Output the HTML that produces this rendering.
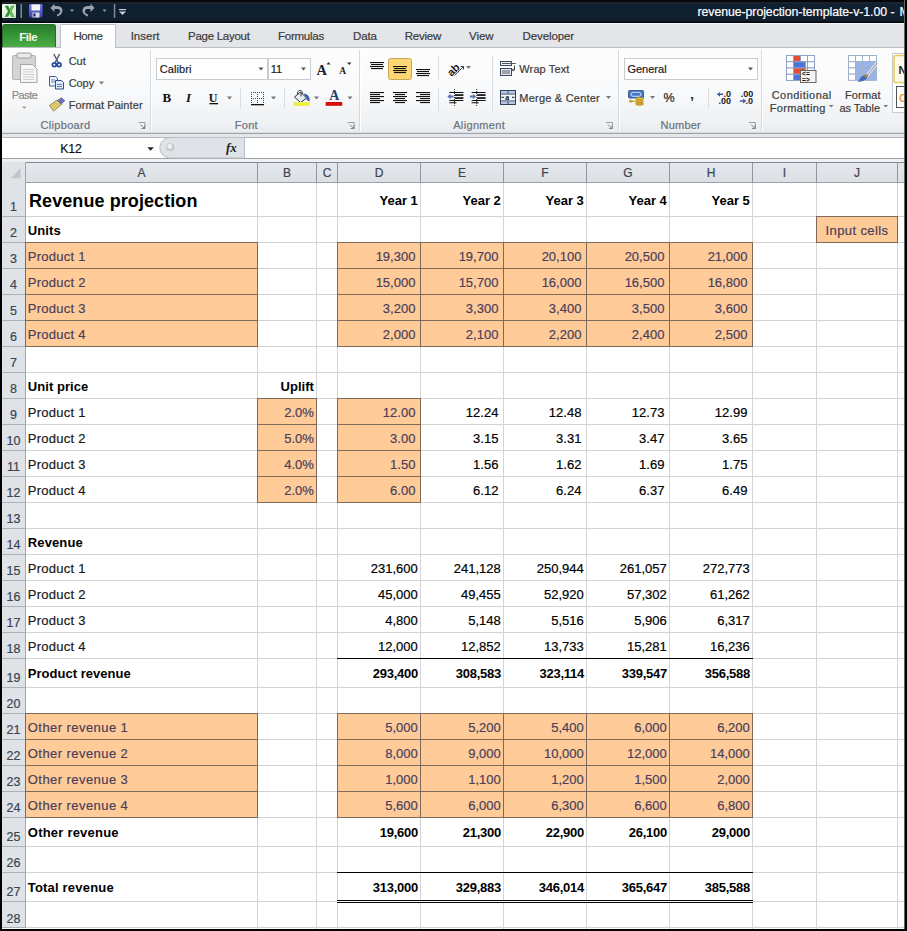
<!DOCTYPE html><html><head><meta charset="utf-8"><style>*{margin:0;padding:0;box-sizing:border-box}
html,body{width:907px;height:931px;overflow:hidden;background:#fff;font-family:"Liberation Sans", sans-serif;position:relative}
.a{position:absolute}
.t{position:absolute;white-space:nowrap;line-height:1}
.n{-webkit-text-stroke:0.2px currentColor}
</style></head><body><div class="a" style="left:0px;top:0px;width:907px;height:23px;background:linear-gradient(#05070b 0px,#05070b 1.5px,#1a2430 2.5px,#17222e 3.5px,#0e1f31 5px,#102030 13px,#111d2b 20.5px,#05090e 22px,#05090e 23px)"></div>
<div class="a" style="left:0px;top:23px;width:907px;height:24px;background:#e3e5e8"></div>
<div class="a" style="left:0px;top:23px;width:907px;height:1px;background:#f3f4f5"></div>
<div class="a" style="left:0px;top:47px;width:907px;height:87px;background:linear-gradient(#fdfdfd 0%,#f9fafb 50%,#eff1f3 85%,#e9ecef 100%)"></div>
<div class="a" style="left:0px;top:47px;width:907px;height:1px;background:#b9bec4"></div>
<div class="a" style="left:0px;top:133px;width:907px;height:1px;background:#9ea4ab"></div>
<div class="a" style="left:0px;top:132px;width:907px;height:1px;background:#d9dde1"></div>
<div class="a" style="left:0px;top:134px;width:907px;height:28px;background:#e4e7ea"></div>
<div class="a" style="left:0px;top:137px;width:907px;height:1px;background:#b3b9c0"></div>
<div class="a" style="left:0px;top:138px;width:907px;height:20px;background:#fff"></div>
<div class="a" style="left:0px;top:158px;width:907px;height:1px;background:#9ea2a7"></div>
<div class="a" style="left:0px;top:159px;width:907px;height:3px;background:#eef0f3"></div>
<div class="a" style="left:0px;top:162px;width:907px;height:21px;background:linear-gradient(#e5e8ec,#dcdfe4)"></div>
<div class="a" style="left:0px;top:162px;width:907px;height:1px;background:#7f8893"></div>
<div class="a" style="left:0px;top:182px;width:907px;height:1px;background:#9aa1a9"></div>
<div class="a" style="left:0px;top:162px;width:25px;height:766px;background:#dfe3e8"></div>
<div class="a" style="left:25px;top:162px;width:1px;height:766px;background:#9ea7b1"></div>
<svg class="a" style="left:0;top:160px" width="26" height="24"><path d="M20.6,7.9 L20.6,18.2 L10.6,18.2 Z" fill="#c3c7cc"/></svg>
<div class="a" style="left:257px;top:183px;width:1px;height:746px;background:#d4d4d4"></div>
<div class="a" style="left:257px;top:163px;width:1px;height:19px;background:#8e969f"></div>
<div class="a" style="left:316px;top:183px;width:1px;height:746px;background:#d4d4d4"></div>
<div class="a" style="left:316px;top:163px;width:1px;height:19px;background:#8e969f"></div>
<div class="a" style="left:337px;top:183px;width:1px;height:746px;background:#d4d4d4"></div>
<div class="a" style="left:337px;top:163px;width:1px;height:19px;background:#8e969f"></div>
<div class="a" style="left:420px;top:183px;width:1px;height:746px;background:#d4d4d4"></div>
<div class="a" style="left:420px;top:163px;width:1px;height:19px;background:#8e969f"></div>
<div class="a" style="left:503px;top:183px;width:1px;height:746px;background:#d4d4d4"></div>
<div class="a" style="left:503px;top:163px;width:1px;height:19px;background:#8e969f"></div>
<div class="a" style="left:586px;top:183px;width:1px;height:746px;background:#d4d4d4"></div>
<div class="a" style="left:586px;top:163px;width:1px;height:19px;background:#8e969f"></div>
<div class="a" style="left:669px;top:183px;width:1px;height:746px;background:#d4d4d4"></div>
<div class="a" style="left:669px;top:163px;width:1px;height:19px;background:#8e969f"></div>
<div class="a" style="left:752px;top:183px;width:1px;height:746px;background:#d4d4d4"></div>
<div class="a" style="left:752px;top:163px;width:1px;height:19px;background:#8e969f"></div>
<div class="a" style="left:816px;top:183px;width:1px;height:746px;background:#d4d4d4"></div>
<div class="a" style="left:816px;top:163px;width:1px;height:19px;background:#8e969f"></div>
<div class="a" style="left:897px;top:183px;width:1px;height:746px;background:#d4d4d4"></div>
<div class="a" style="left:897px;top:163px;width:1px;height:19px;background:#8e969f"></div>
<div class="a" style="left:26px;top:216px;width:878px;height:1px;background:#d4d4d4"></div>
<div class="a" style="left:2px;top:216px;width:23px;height:1px;background:#aab1b9"></div>
<div class="a" style="left:26px;top:242px;width:878px;height:1px;background:#d4d4d4"></div>
<div class="a" style="left:2px;top:242px;width:23px;height:1px;background:#aab1b9"></div>
<div class="a" style="left:26px;top:268px;width:878px;height:1px;background:#d4d4d4"></div>
<div class="a" style="left:2px;top:268px;width:23px;height:1px;background:#aab1b9"></div>
<div class="a" style="left:26px;top:294px;width:878px;height:1px;background:#d4d4d4"></div>
<div class="a" style="left:2px;top:294px;width:23px;height:1px;background:#aab1b9"></div>
<div class="a" style="left:26px;top:320px;width:878px;height:1px;background:#d4d4d4"></div>
<div class="a" style="left:2px;top:320px;width:23px;height:1px;background:#aab1b9"></div>
<div class="a" style="left:26px;top:346px;width:878px;height:1px;background:#d4d4d4"></div>
<div class="a" style="left:2px;top:346px;width:23px;height:1px;background:#aab1b9"></div>
<div class="a" style="left:26px;top:372px;width:878px;height:1px;background:#d4d4d4"></div>
<div class="a" style="left:2px;top:372px;width:23px;height:1px;background:#aab1b9"></div>
<div class="a" style="left:26px;top:398px;width:878px;height:1px;background:#d4d4d4"></div>
<div class="a" style="left:2px;top:398px;width:23px;height:1px;background:#aab1b9"></div>
<div class="a" style="left:26px;top:424px;width:878px;height:1px;background:#d4d4d4"></div>
<div class="a" style="left:2px;top:424px;width:23px;height:1px;background:#aab1b9"></div>
<div class="a" style="left:26px;top:450px;width:878px;height:1px;background:#d4d4d4"></div>
<div class="a" style="left:2px;top:450px;width:23px;height:1px;background:#aab1b9"></div>
<div class="a" style="left:26px;top:476px;width:878px;height:1px;background:#d4d4d4"></div>
<div class="a" style="left:2px;top:476px;width:23px;height:1px;background:#aab1b9"></div>
<div class="a" style="left:26px;top:502px;width:878px;height:1px;background:#d4d4d4"></div>
<div class="a" style="left:2px;top:502px;width:23px;height:1px;background:#aab1b9"></div>
<div class="a" style="left:26px;top:528px;width:878px;height:1px;background:#d4d4d4"></div>
<div class="a" style="left:2px;top:528px;width:23px;height:1px;background:#aab1b9"></div>
<div class="a" style="left:26px;top:554px;width:878px;height:1px;background:#d4d4d4"></div>
<div class="a" style="left:2px;top:554px;width:23px;height:1px;background:#aab1b9"></div>
<div class="a" style="left:26px;top:580px;width:878px;height:1px;background:#d4d4d4"></div>
<div class="a" style="left:2px;top:580px;width:23px;height:1px;background:#aab1b9"></div>
<div class="a" style="left:26px;top:606px;width:878px;height:1px;background:#d4d4d4"></div>
<div class="a" style="left:2px;top:606px;width:23px;height:1px;background:#aab1b9"></div>
<div class="a" style="left:26px;top:632px;width:878px;height:1px;background:#d4d4d4"></div>
<div class="a" style="left:2px;top:632px;width:23px;height:1px;background:#aab1b9"></div>
<div class="a" style="left:26px;top:658px;width:878px;height:1px;background:#d4d4d4"></div>
<div class="a" style="left:2px;top:658px;width:23px;height:1px;background:#aab1b9"></div>
<div class="a" style="left:26px;top:687px;width:878px;height:1px;background:#d4d4d4"></div>
<div class="a" style="left:2px;top:687px;width:23px;height:1px;background:#aab1b9"></div>
<div class="a" style="left:26px;top:713px;width:878px;height:1px;background:#d4d4d4"></div>
<div class="a" style="left:2px;top:713px;width:23px;height:1px;background:#aab1b9"></div>
<div class="a" style="left:26px;top:739px;width:878px;height:1px;background:#d4d4d4"></div>
<div class="a" style="left:2px;top:739px;width:23px;height:1px;background:#aab1b9"></div>
<div class="a" style="left:26px;top:765px;width:878px;height:1px;background:#d4d4d4"></div>
<div class="a" style="left:2px;top:765px;width:23px;height:1px;background:#aab1b9"></div>
<div class="a" style="left:26px;top:791px;width:878px;height:1px;background:#d4d4d4"></div>
<div class="a" style="left:2px;top:791px;width:23px;height:1px;background:#aab1b9"></div>
<div class="a" style="left:26px;top:817px;width:878px;height:1px;background:#d4d4d4"></div>
<div class="a" style="left:2px;top:817px;width:23px;height:1px;background:#aab1b9"></div>
<div class="a" style="left:26px;top:846px;width:878px;height:1px;background:#d4d4d4"></div>
<div class="a" style="left:2px;top:846px;width:23px;height:1px;background:#aab1b9"></div>
<div class="a" style="left:26px;top:872px;width:878px;height:1px;background:#d4d4d4"></div>
<div class="a" style="left:2px;top:872px;width:23px;height:1px;background:#aab1b9"></div>
<div class="a" style="left:26px;top:901px;width:878px;height:1px;background:#d4d4d4"></div>
<div class="a" style="left:2px;top:901px;width:23px;height:1px;background:#aab1b9"></div>
<div class="a" style="left:26px;top:927px;width:878px;height:1px;background:#d4d4d4"></div>
<div class="a" style="left:2px;top:927px;width:23px;height:1px;background:#aab1b9"></div>
<div class="a" style="left:25px;top:242px;width:233px;height:105px;background:#ffcc99"></div>
<div class="a" style="left:25px;top:242px;width:233px;height:1px;background:#7d6a58"></div>
<div class="a" style="left:25px;top:268px;width:233px;height:1px;background:#7d6a58"></div>
<div class="a" style="left:25px;top:294px;width:233px;height:1px;background:#7d6a58"></div>
<div class="a" style="left:25px;top:320px;width:233px;height:1px;background:#7d6a58"></div>
<div class="a" style="left:25px;top:346px;width:233px;height:1px;background:#7d6a58"></div>
<div class="a" style="left:25px;top:242px;width:1px;height:105px;background:#7d6a58"></div>
<div class="a" style="left:257px;top:242px;width:1px;height:105px;background:#7d6a58"></div>
<div class="a" style="left:337px;top:242px;width:416px;height:105px;background:#ffcc99"></div>
<div class="a" style="left:337px;top:242px;width:416px;height:1px;background:#7d6a58"></div>
<div class="a" style="left:337px;top:268px;width:416px;height:1px;background:#7d6a58"></div>
<div class="a" style="left:337px;top:294px;width:416px;height:1px;background:#7d6a58"></div>
<div class="a" style="left:337px;top:320px;width:416px;height:1px;background:#7d6a58"></div>
<div class="a" style="left:337px;top:346px;width:416px;height:1px;background:#7d6a58"></div>
<div class="a" style="left:337px;top:242px;width:1px;height:105px;background:#7d6a58"></div>
<div class="a" style="left:420px;top:242px;width:1px;height:105px;background:#7d6a58"></div>
<div class="a" style="left:503px;top:242px;width:1px;height:105px;background:#7d6a58"></div>
<div class="a" style="left:586px;top:242px;width:1px;height:105px;background:#7d6a58"></div>
<div class="a" style="left:669px;top:242px;width:1px;height:105px;background:#7d6a58"></div>
<div class="a" style="left:752px;top:242px;width:1px;height:105px;background:#7d6a58"></div>
<div class="a" style="left:816px;top:216px;width:82px;height:27px;background:#ffcc99"></div>
<div class="a" style="left:816px;top:216px;width:82px;height:1px;background:#7d6a58"></div>
<div class="a" style="left:816px;top:242px;width:82px;height:1px;background:#7d6a58"></div>
<div class="a" style="left:816px;top:216px;width:1px;height:27px;background:#7d6a58"></div>
<div class="a" style="left:897px;top:216px;width:1px;height:27px;background:#7d6a58"></div>
<div class="a" style="left:257px;top:398px;width:60px;height:105px;background:#ffcc99"></div>
<div class="a" style="left:257px;top:398px;width:60px;height:1px;background:#7d6a58"></div>
<div class="a" style="left:257px;top:424px;width:60px;height:1px;background:#7d6a58"></div>
<div class="a" style="left:257px;top:450px;width:60px;height:1px;background:#7d6a58"></div>
<div class="a" style="left:257px;top:476px;width:60px;height:1px;background:#7d6a58"></div>
<div class="a" style="left:257px;top:502px;width:60px;height:1px;background:#7d6a58"></div>
<div class="a" style="left:257px;top:398px;width:1px;height:105px;background:#7d6a58"></div>
<div class="a" style="left:316px;top:398px;width:1px;height:105px;background:#7d6a58"></div>
<div class="a" style="left:337px;top:398px;width:84px;height:105px;background:#ffcc99"></div>
<div class="a" style="left:337px;top:398px;width:84px;height:1px;background:#7d6a58"></div>
<div class="a" style="left:337px;top:424px;width:84px;height:1px;background:#7d6a58"></div>
<div class="a" style="left:337px;top:450px;width:84px;height:1px;background:#7d6a58"></div>
<div class="a" style="left:337px;top:476px;width:84px;height:1px;background:#7d6a58"></div>
<div class="a" style="left:337px;top:502px;width:84px;height:1px;background:#7d6a58"></div>
<div class="a" style="left:337px;top:398px;width:1px;height:105px;background:#7d6a58"></div>
<div class="a" style="left:420px;top:398px;width:1px;height:105px;background:#7d6a58"></div>
<div class="a" style="left:25px;top:713px;width:233px;height:105px;background:#ffcc99"></div>
<div class="a" style="left:25px;top:713px;width:233px;height:1px;background:#7d6a58"></div>
<div class="a" style="left:25px;top:739px;width:233px;height:1px;background:#7d6a58"></div>
<div class="a" style="left:25px;top:765px;width:233px;height:1px;background:#7d6a58"></div>
<div class="a" style="left:25px;top:791px;width:233px;height:1px;background:#7d6a58"></div>
<div class="a" style="left:25px;top:817px;width:233px;height:1px;background:#7d6a58"></div>
<div class="a" style="left:25px;top:713px;width:1px;height:105px;background:#7d6a58"></div>
<div class="a" style="left:257px;top:713px;width:1px;height:105px;background:#7d6a58"></div>
<div class="a" style="left:337px;top:713px;width:416px;height:105px;background:#ffcc99"></div>
<div class="a" style="left:337px;top:713px;width:416px;height:1px;background:#7d6a58"></div>
<div class="a" style="left:337px;top:739px;width:416px;height:1px;background:#7d6a58"></div>
<div class="a" style="left:337px;top:765px;width:416px;height:1px;background:#7d6a58"></div>
<div class="a" style="left:337px;top:791px;width:416px;height:1px;background:#7d6a58"></div>
<div class="a" style="left:337px;top:817px;width:416px;height:1px;background:#7d6a58"></div>
<div class="a" style="left:337px;top:713px;width:1px;height:105px;background:#7d6a58"></div>
<div class="a" style="left:420px;top:713px;width:1px;height:105px;background:#7d6a58"></div>
<div class="a" style="left:503px;top:713px;width:1px;height:105px;background:#7d6a58"></div>
<div class="a" style="left:586px;top:713px;width:1px;height:105px;background:#7d6a58"></div>
<div class="a" style="left:669px;top:713px;width:1px;height:105px;background:#7d6a58"></div>
<div class="a" style="left:752px;top:713px;width:1px;height:105px;background:#7d6a58"></div>
<div class="a" style="left:337px;top:658px;width:416px;height:1px;background:#000"></div>
<div class="a" style="left:337px;top:872px;width:416px;height:1px;background:#000"></div>
<div class="a" style="left:337px;top:900px;width:416px;height:1px;background:#000"></div>
<div class="a" style="left:337px;top:902px;width:416px;height:1px;background:#000"></div>
<div class="a" style="left:337px;top:901px;width:416px;height:1px;background:#fff"></div>
<div class="a" style="left:2px;top:24px;width:54px;height:23px;background:linear-gradient(#2a7c2d,#3a9a3a 60%,#4cae44);border:1px solid #236d26;border-bottom:none;border-radius:3px 3px 0 0"></div>
<div class="a" style="left:60px;top:24px;width:56px;height:24px;background:linear-gradient(#fff,#fbfcfd);border:1px solid #bac1c9;border-bottom:none;border-radius:2px 2px 0 0"></div>
<svg class="a" style="left:0;top:0" width="907" height="162" viewBox="0 0 907 162"><defs><linearGradient id="xg" x1="0" y1="0" x2="1" y2="1"><stop offset="0" stop-color="#f4fbf0"/><stop offset="1" stop-color="#cfeac4"/></linearGradient><linearGradient id="sg" x1="0" y1="0" x2="0" y2="1"><stop offset="0" stop-color="#7a7ee6"/><stop offset="1" stop-color="#3a3fb0"/></linearGradient></defs><rect x="2" y="4" width="14" height="14" rx="1" fill="url(#xg)"/><path d="M4.8,5.8h3.3l1.6,3.2l1.6,-3.2h3.3l-3.2,5.4l3.2,5.6h-3.3l-1.6,-3.2l-1.6,3.2h-3.3l3.2,-5.6z" fill="#2f8a36"/><path d="M9.7,9 l1.6,-3.2h3.3l-3.2,5.4l3.2,5.6h-3.3l-1.6,-3.2z" fill="#7cc46e" opacity="0.8"/><rect x="20.5" y="4" width="1.5" height="14" fill="#7d8a97"/><rect x="29" y="4" width="13.5" height="13.5" rx="1.5" fill="url(#sg)"/><rect x="31.5" y="4.5" width="8.5" height="6" fill="#f4f4f8"/><rect x="32.5" y="12.5" width="7" height="5" fill="#d8d8ee"/><rect x="33.5" y="13.5" width="2" height="3" fill="#1a1a3a"/><path d="M57,16.5 C64,15 64.5,6 57.5,6 L54.5,6 L54.5,3.5 L50.5,8 L54.5,12 L54.5,9 L57.5,9 C61,9 61,13.5 57,14.5 Z" fill="#9aa3ad"/><path d="M88,16.5 C81,15 80.5,6 87.5,6 L90.5,6 L90.5,3.5 L94.5,8 L90.5,12 L90.5,9 L87.5,9 C84,9 84,13.5 88,14.5 Z" fill="#9aa3ad"/><path d="M70,9.5h4l-2.0,2.5z" fill="#8d97a2"/><path d="M102.5,9.5h4l-2.0,2.5z" fill="#8d97a2"/><rect x="113.8" y="4" width="1.5" height="14" fill="#7d8a97"/><rect x="119" y="9" width="7" height="1.2" fill="#c8cdd3"/><path d="M119,11.5h7l-3.5,3.5z" fill="#c8cdd3"/><rect x="150" y="50" width="1" height="81" fill="#d6dadf"/><rect x="151" y="50" width="1" height="81" fill="#ffffff"/><rect x="359" y="50" width="1" height="81" fill="#d6dadf"/><rect x="360" y="50" width="1" height="81" fill="#ffffff"/><rect x="618" y="50" width="1" height="81" fill="#d6dadf"/><rect x="619" y="50" width="1" height="81" fill="#ffffff"/><rect x="761" y="50" width="1" height="81" fill="#d6dadf"/><rect x="762" y="50" width="1" height="81" fill="#ffffff"/><rect x="240" y="88" width="1" height="20" fill="#d9dde2"/><rect x="284" y="88" width="1" height="20" fill="#d9dde2"/><rect x="708" y="88" width="1" height="20" fill="#d9dde2"/><rect x="438" y="56" width="1" height="24" fill="#d9dde2"/><rect x="438" y="88" width="1" height="23.5" fill="#d9dde2"/><rect x="492" y="56" width="1" height="55.5" fill="#d9dde2"/><path d="M138.5,122.5h6.5v6.5" fill="none" stroke="#9aa0a8" stroke-width="1"/><path d="M140.5,124.5l4,4m0,-3v3h-3" fill="none" stroke="#7d848c" stroke-width="1"/><path d="M347.7,122.5h6.5v6.5" fill="none" stroke="#9aa0a8" stroke-width="1"/><path d="M349.7,124.5l4,4m0,-3v3h-3" fill="none" stroke="#7d848c" stroke-width="1"/><path d="M606,122.5h6.5v6.5" fill="none" stroke="#9aa0a8" stroke-width="1"/><path d="M608,124.5l4,4m0,-3v3h-3" fill="none" stroke="#7d848c" stroke-width="1"/><path d="M749,122.5h6.5v6.5" fill="none" stroke="#9aa0a8" stroke-width="1"/><path d="M751,124.5l4,4m0,-3v3h-3" fill="none" stroke="#7d848c" stroke-width="1"/><rect x="12.5" y="55.5" width="23" height="24" rx="1.5" fill="#d4d4d4" stroke="#b3b3b3"/><rect x="17" y="53" width="14" height="5" rx="1" fill="#e9e9e9" stroke="#9d9d9d"/><path d="M20.5,64.5h12l4.5,4.5v13.5h-16.5z" fill="#f8f6f8" stroke="#a8a8a8"/><rect x="23" y="69" width="11" height="0.9" fill="#c9c9c9"/><rect x="23" y="71.5" width="11" height="0.9" fill="#c9c9c9"/><rect x="23" y="74" width="11" height="0.9" fill="#c9c9c9"/><rect x="23" y="76.5" width="11" height="0.9" fill="#c9c9c9"/><rect x="23" y="79" width="11" height="0.9" fill="#c9c9c9"/><path d="M22,106.5h4.5l-2.25,2.5z" fill="#a0a0a0"/><path d="M53.8,54 L58.2,62.5 M59.6,54 L55.2,62.5" stroke="#4a5570" stroke-width="1.4" fill="none"/><circle cx="54.3" cy="64.8" r="1.9" fill="#fff" stroke="#24489a" stroke-width="1.7"/><circle cx="59.1" cy="64.8" r="1.9" fill="#fff" stroke="#24489a" stroke-width="1.7"/><path d="M49.5,76.5h6l2,2v7.5h-8z" fill="#eef3fb" stroke="#3d5f98"/><path d="M55.5,80.5h6l2,2v6.5h-8z" fill="#dfe8f6" stroke="#2d4f88"/><rect x="51" y="79.5" width="4" height="0.9" fill="#5478b6"/><rect x="51" y="81.5" width="4" height="0.9" fill="#5478b6"/><rect x="57" y="84" width="5" height="0.9" fill="#5478b6"/><rect x="57" y="86" width="5" height="0.9" fill="#5478b6"/><path d="M99,81.5h5l-2.5,3z" fill="#777"/><path d="M49.5,105.5 L57,100 L61.5,104.5 L53.5,111 Z" fill="#e2d27a" stroke="#7d6d30" stroke-width="0.8"/><path d="M51.5,106.5 L57.5,102 M52.5,108.5 L59,103.5" stroke="#b8a450" stroke-width="0.6"/><path d="M57.5,100.5 L61.5,97.8 L64.8,100.8 L61.2,104 Z" fill="#7573c0" stroke="#4b4a8a" stroke-width="0.6"/><rect x="156.5" y="58.5" width="111" height="21" fill="#fff" stroke="#c7ccd2"/><rect x="268.5" y="58.5" width="42" height="21" fill="#fff" stroke="#c7ccd2"/><path d="M258.5,67.5h5l-2.5,3z" fill="#555"/><path d="M301,67.5h5l-2.5,3z" fill="#555"/><path d="M326.5,64.5l2,-2.5l2,2.5z" fill="#333"/><path d="M347,62.5h4.5l-2.25,2.5z" fill="#333"/><rect x="209.5" y="103" width="8.5" height="1.3" fill="#111"/><path d="M227,96.5h5l-2.5,3z" fill="#777"/><rect x="251" y="92" width="1" height="1" fill="#444"/><rect x="251" y="98" width="1" height="1" fill="#444"/><rect x="251" y="92" width="1" height="1" fill="#444"/><rect x="257" y="92" width="1" height="1" fill="#444"/><rect x="263" y="92" width="1" height="1" fill="#444"/><rect x="253" y="92" width="1" height="1" fill="#444"/><rect x="253" y="98" width="1" height="1" fill="#444"/><rect x="251" y="94" width="1" height="1" fill="#444"/><rect x="257" y="94" width="1" height="1" fill="#444"/><rect x="263" y="94" width="1" height="1" fill="#444"/><rect x="255" y="92" width="1" height="1" fill="#444"/><rect x="255" y="98" width="1" height="1" fill="#444"/><rect x="251" y="96" width="1" height="1" fill="#444"/><rect x="257" y="96" width="1" height="1" fill="#444"/><rect x="263" y="96" width="1" height="1" fill="#444"/><rect x="257" y="92" width="1" height="1" fill="#444"/><rect x="257" y="98" width="1" height="1" fill="#444"/><rect x="251" y="98" width="1" height="1" fill="#444"/><rect x="257" y="98" width="1" height="1" fill="#444"/><rect x="263" y="98" width="1" height="1" fill="#444"/><rect x="259" y="92" width="1" height="1" fill="#444"/><rect x="259" y="98" width="1" height="1" fill="#444"/><rect x="251" y="100" width="1" height="1" fill="#444"/><rect x="257" y="100" width="1" height="1" fill="#444"/><rect x="263" y="100" width="1" height="1" fill="#444"/><rect x="261" y="92" width="1" height="1" fill="#444"/><rect x="261" y="98" width="1" height="1" fill="#444"/><rect x="251" y="102" width="1" height="1" fill="#444"/><rect x="257" y="102" width="1" height="1" fill="#444"/><rect x="263" y="102" width="1" height="1" fill="#444"/><rect x="263" y="92" width="1" height="1" fill="#444"/><rect x="263" y="98" width="1" height="1" fill="#444"/><rect x="251" y="104" width="1" height="1" fill="#444"/><rect x="257" y="104" width="1" height="1" fill="#444"/><rect x="263" y="104" width="1" height="1" fill="#444"/><rect x="251" y="104" width="13" height="1.3" fill="#111"/><path d="M271,96.5h5l-2.5,3z" fill="#777"/><path d="M294.5,97 L300.5,92 L306.5,98 L300.5,102.5 Z" fill="#e6edf6" stroke="#2b2b2b" stroke-width="1"/><path d="M297.5,94.5 C297,89.5 302.5,89 302.5,93.5" fill="none" stroke="#333" stroke-width="1"/><rect x="300.5" y="92.5" width="1" height="4" fill="#333"/><path d="M303.5,93.5 C308,93.5 310.5,97.5 309.5,101.5 L306.5,100 L306.5,98 Z" fill="#3d5fa6"/><rect x="293.5" y="102" width="16" height="4" fill="#eef04a"/><path d="M314,96.5h5l-2.5,3z" fill="#777"/><rect x="325.7" y="102" width="16.5" height="3.8" fill="#d70a0a"/><path d="M347.5,96.5h5l-2.5,3z" fill="#777"/><rect x="388.5" y="58.5" width="23" height="21" rx="2" fill="#fcd774" stroke="#c9a858"/><rect x="370" y="62" width="14" height="1.1" fill="#111"/><rect x="371" y="64" width="12" height="1.1" fill="#111"/><rect x="370" y="66" width="14" height="1.1" fill="#111"/><rect x="371" y="68" width="12" height="1.1" fill="#111"/><rect x="393" y="66" width="14" height="1.1" fill="#111"/><rect x="394" y="68" width="12" height="1.1" fill="#111"/><rect x="393" y="70" width="14" height="1.1" fill="#111"/><rect x="394" y="72" width="12" height="1.1" fill="#111"/><rect x="416" y="69" width="14" height="1.1" fill="#111"/><rect x="417" y="71" width="12" height="1.1" fill="#111"/><rect x="416" y="73" width="14" height="1.1" fill="#111"/><rect x="417" y="75" width="12" height="1.1" fill="#111"/><rect x="370" y="92" width="14" height="1.1" fill="#111"/><rect x="393.0" y="92" width="14" height="1.1" fill="#111"/><rect x="416" y="92" width="14" height="1.1" fill="#111"/><rect x="370" y="94" width="10" height="1.1" fill="#111"/><rect x="395.0" y="94" width="10" height="1.1" fill="#111"/><rect x="420" y="94" width="10" height="1.1" fill="#111"/><rect x="370" y="96" width="14" height="1.1" fill="#111"/><rect x="393.0" y="96" width="14" height="1.1" fill="#111"/><rect x="416" y="96" width="14" height="1.1" fill="#111"/><rect x="370" y="98" width="10" height="1.1" fill="#111"/><rect x="395.0" y="98" width="10" height="1.1" fill="#111"/><rect x="420" y="98" width="10" height="1.1" fill="#111"/><rect x="370" y="100" width="14" height="1.1" fill="#111"/><rect x="393.0" y="100" width="14" height="1.1" fill="#111"/><rect x="416" y="100" width="14" height="1.1" fill="#111"/><rect x="370" y="102" width="10" height="1.1" fill="#111"/><rect x="395.0" y="102" width="10" height="1.1" fill="#111"/><rect x="420" y="102" width="10" height="1.1" fill="#111"/><text x="0" y="0" transform="translate(451.5,77) rotate(-45)" font-family="Liberation Sans" font-size="11" font-weight="bold" fill="#1a1a1a">ab</text><path d="M454.5,75.5 L463.5,66.5" stroke="#333" stroke-width="0.9"/><path d="M460.5,66.5 h3 v3" stroke="#333" fill="none" stroke-width="0.9"/><path d="M466,66h5l-2.5,3z" fill="#777"/><rect x="454.0" y="89" width="1" height="1" fill="#333"/><rect x="454.0" y="91" width="1" height="1" fill="#333"/><rect x="454.0" y="93" width="1" height="1" fill="#333"/><rect x="454.0" y="95" width="1" height="1" fill="#333"/><rect x="454.0" y="97" width="1" height="1" fill="#333"/><rect x="454.0" y="99" width="1" height="1" fill="#333"/><rect x="454.0" y="101" width="1" height="1" fill="#333"/><rect x="454.0" y="103" width="1" height="1" fill="#333"/><rect x="454.0" y="105" width="1" height="1" fill="#333"/><rect x="449.4" y="92" width="14" height="1" fill="#111"/><rect x="454.9" y="94.2" width="8.5" height="1.7" fill="#111"/><rect x="454.9" y="97.2" width="8.5" height="1.7" fill="#111"/><rect x="449.4" y="100" width="14" height="1" fill="#111"/><rect x="449.4" y="102.2" width="7" height="1" fill="#111"/><path d="M447.4,96.5 l3.2,-2.8 v1.9 h3 v1.8 h-3 v1.9z" fill="#5873ad"/><rect x="476.20000000000005" y="89" width="1" height="1" fill="#333"/><rect x="476.20000000000005" y="91" width="1" height="1" fill="#333"/><rect x="476.20000000000005" y="93" width="1" height="1" fill="#333"/><rect x="476.20000000000005" y="95" width="1" height="1" fill="#333"/><rect x="476.20000000000005" y="97" width="1" height="1" fill="#333"/><rect x="476.20000000000005" y="99" width="1" height="1" fill="#333"/><rect x="476.20000000000005" y="101" width="1" height="1" fill="#333"/><rect x="476.20000000000005" y="103" width="1" height="1" fill="#333"/><rect x="476.20000000000005" y="105" width="1" height="1" fill="#333"/><rect x="471.6" y="92" width="14" height="1" fill="#111"/><rect x="477.1" y="94.2" width="8.5" height="1.7" fill="#111"/><rect x="477.1" y="97.2" width="8.5" height="1.7" fill="#111"/><rect x="471.6" y="100" width="14" height="1" fill="#111"/><rect x="471.6" y="102.2" width="7" height="1" fill="#111"/><path d="M476.1,96.5 l-3.2,-2.8 v1.9 h-3 v1.8 h3 v1.9z" fill="#5873ad"/><rect x="500.5" y="61.5" width="11" height="4" fill="#eef2f8" stroke="#3b4a66" stroke-width="1"/><rect x="502" y="63" width="13.8" height="1" fill="#555"/><path d="M514.5,65.5 v4.5 h-2" fill="none" stroke="#444" stroke-width="1"/><path d="M511.5,70 l2,-1.6 v3.2z" fill="#444"/><rect x="500.5" y="68.5" width="11" height="7" fill="#dfe7f3" stroke="#3b4a66" stroke-width="1"/><rect x="502" y="70.5" width="8" height="1" fill="#6b5a4a"/><rect x="502" y="72.5" width="8" height="1" fill="#6b5a4a"/><rect x="500.5" y="90.5" width="15" height="14" fill="#f4f7fb" stroke="#2f3f60" stroke-width="1"/><rect x="501" y="91" width="14" height="2.6" fill="#b9c8e2"/><rect x="501" y="101.4" width="14" height="2.6" fill="#b9c8e2"/><rect x="501" y="93.6" width="14" height="0.9" fill="#2f3f60"/><rect x="501" y="100.5" width="14" height="0.9" fill="#2f3f60"/><rect x="507.6" y="91" width="0.9" height="2.6" fill="#2f3f60"/><rect x="507.6" y="101.4" width="0.9" height="2.6" fill="#2f3f60"/><text x="505" y="100" font-family="Liberation Serif" font-size="8.5" font-weight="bold" fill="#111">a</text><path d="M501.5,97.3h2.5M512,97.3h2.5" stroke="#111" stroke-width="1"/><path d="M606,96h5l-2.5,3z" fill="#777"/><rect x="624.5" y="58.5" width="133" height="21" fill="#fff" stroke="#c7ccd2"/><path d="M748,67.5h5l-2.5,3z" fill="#555"/><rect x="628.5" y="90.5" width="15" height="7.5" rx="1" fill="#4a78c8" stroke="#2c4f90" stroke-width="0.9"/><rect x="631" y="92.3" width="10" height="4" rx="2" fill="none" stroke="#d8e6ff" stroke-width="0.9"/><ellipse cx="639.5" cy="98.8" rx="4" ry="1.5" fill="#e8c040" stroke="#9a7a20" stroke-width="0.6"/><ellipse cx="639.5" cy="101.3" rx="4" ry="1.5" fill="#e0b030" stroke="#9a7a20" stroke-width="0.6"/><ellipse cx="639.5" cy="103.8" rx="4" ry="1.5" fill="#d8a828" stroke="#9a7a20" stroke-width="0.6"/><path d="M628.5,101.3 l2.8,-2 v1.3 h3.5 v1.4 h-3.5 v1.3z" fill="#c89820"/><path d="M650,96h5l-2.5,3z" fill="#777"/><text x="690.3" y="98.8" font-family="Liberation Sans" font-size="13" font-weight="bold" fill="#222">,</text><text x="723.5" y="96.8" font-family="Liberation Sans" font-size="9" font-weight="bold" fill="#222">.0</text><text x="718.5" y="103.8" font-family="Liberation Sans" font-size="9" font-weight="bold" fill="#222">.00</text><path d="M716.8,94.3 l3.2,-2.4 v1.6 h3.2 v1.6 h-3.2 v1.6z" fill="#3a5fa8"/><text x="740.8" y="96.8" font-family="Liberation Sans" font-size="9" font-weight="bold" fill="#222">.00</text><text x="745.5" y="103.8" font-family="Liberation Sans" font-size="9" font-weight="bold" fill="#222">.0</text><path d="M746.3,101 l-3.2,-2.4 v1.6 h-3.2 v1.6 h3.2 v1.6z" fill="#3a5fa8"/><rect x="786.5" y="55.5" width="7" height="6.25" fill="#ffffff" stroke="#8fa2c4" stroke-width="1"/><rect x="786.5" y="61.75" width="7" height="6.25" fill="#ffffff" stroke="#8fa2c4" stroke-width="1"/><rect x="786.5" y="68.0" width="7" height="6.25" fill="#ffffff" stroke="#8fa2c4" stroke-width="1"/><rect x="786.5" y="74.25" width="7" height="6.25" fill="#ffffff" stroke="#8fa2c4" stroke-width="1"/><rect x="793.5" y="55.5" width="7" height="6.25" fill="#ffffff" stroke="#8fa2c4" stroke-width="1"/><rect x="793.5" y="61.75" width="7" height="6.25" fill="#ffffff" stroke="#8fa2c4" stroke-width="1"/><rect x="793.5" y="68.0" width="7" height="6.25" fill="#ffffff" stroke="#8fa2c4" stroke-width="1"/><rect x="793.5" y="74.25" width="7" height="6.25" fill="#ffffff" stroke="#8fa2c4" stroke-width="1"/><rect x="800.5" y="55.5" width="7" height="6.25" fill="#ffffff" stroke="#8fa2c4" stroke-width="1"/><rect x="800.5" y="61.75" width="7" height="6.25" fill="#ffffff" stroke="#8fa2c4" stroke-width="1"/><rect x="800.5" y="68.0" width="7" height="6.25" fill="#ffffff" stroke="#8fa2c4" stroke-width="1"/><rect x="800.5" y="74.25" width="7" height="6.25" fill="#ffffff" stroke="#8fa2c4" stroke-width="1"/><rect x="807.5" y="55.5" width="7" height="6.25" fill="#ffffff" stroke="#8fa2c4" stroke-width="1"/><rect x="807.5" y="61.75" width="7" height="6.25" fill="#ffffff" stroke="#8fa2c4" stroke-width="1"/><rect x="807.5" y="68.0" width="7" height="6.25" fill="#ffffff" stroke="#8fa2c4" stroke-width="1"/><rect x="807.5" y="74.25" width="7" height="6.25" fill="#ffffff" stroke="#8fa2c4" stroke-width="1"/><rect x="793.5" y="55.5" width="7" height="6.25" fill="#e84a33" stroke="#8fa2c4" stroke-width="1"/><rect x="793.5" y="61.75" width="12" height="6.25" fill="#4f74d8" stroke="#8fa2c4" stroke-width="1"/><rect x="793.5" y="68" width="12" height="6.25" fill="#e84a33" stroke="#8fa2c4" stroke-width="1"/><rect x="793.5" y="74.25" width="7" height="6.25" fill="#4f74d8" stroke="#8fa2c4" stroke-width="1"/><rect x="800.5" y="70.5" width="15.5" height="12" fill="#f4f4f4" stroke="#666" stroke-width="1"/><text x="802" y="76.3" font-family="Liberation Sans" font-size="6.5" font-weight="bold" fill="#111" letter-spacing="0.3">&lt;=</text><text x="802" y="82" font-family="Liberation Sans" font-size="6.5" font-weight="bold" fill="#111" letter-spacing="0.3">=&gt;</text><rect x="848.5" y="55.5" width="7" height="6.2" fill="#ffffff" stroke="#9fb0cc" stroke-width="1"/><rect x="848.5" y="61.7" width="7" height="6.2" fill="#ffffff" stroke="#9fb0cc" stroke-width="1"/><rect x="848.5" y="67.9" width="7" height="6.2" fill="#ffffff" stroke="#9fb0cc" stroke-width="1"/><rect x="848.5" y="74.1" width="7" height="6.2" fill="#ffffff" stroke="#9fb0cc" stroke-width="1"/><rect x="855.5" y="55.5" width="7" height="6.2" fill="#ffffff" stroke="#9fb0cc" stroke-width="1"/><rect x="855.5" y="61.7" width="7" height="6.2" fill="#98b4ea" stroke="#9fb0cc" stroke-width="1"/><rect x="855.5" y="67.9" width="7" height="6.2" fill="#98b4ea" stroke="#9fb0cc" stroke-width="1"/><rect x="855.5" y="74.1" width="7" height="6.2" fill="#98b4ea" stroke="#9fb0cc" stroke-width="1"/><rect x="862.5" y="55.5" width="7" height="6.2" fill="#ffffff" stroke="#9fb0cc" stroke-width="1"/><rect x="862.5" y="61.7" width="7" height="6.2" fill="#98b4ea" stroke="#9fb0cc" stroke-width="1"/><rect x="862.5" y="67.9" width="7" height="6.2" fill="#98b4ea" stroke="#9fb0cc" stroke-width="1"/><rect x="862.5" y="74.1" width="7" height="6.2" fill="#98b4ea" stroke="#9fb0cc" stroke-width="1"/><rect x="869.5" y="55.5" width="7" height="6.2" fill="#ffffff" stroke="#9fb0cc" stroke-width="1"/><rect x="869.5" y="61.7" width="7" height="6.2" fill="#98b4ea" stroke="#9fb0cc" stroke-width="1"/><rect x="869.5" y="67.9" width="7" height="6.2" fill="#98b4ea" stroke="#9fb0cc" stroke-width="1"/><rect x="869.5" y="74.1" width="7" height="6.2" fill="#98b4ea" stroke="#9fb0cc" stroke-width="1"/><path d="M866,77 L877,63" stroke="#e8e8e8" stroke-width="3"/><path d="M866,77 L877,63" stroke="#888" stroke-width="1"/><path d="M858,82 C860,77 864,74 867,76 C868,78 866,81 858,82z" fill="#4a6ab8"/><circle cx="866" cy="76" r="1.8" fill="#a08040"/><path d="M829,105h4.5l-2.25,2.5z" fill="#777"/><path d="M883.5,105h4.5l-2.25,2.5z" fill="#777"/><rect x="892.5" y="53.5" width="14" height="59" fill="#fff" stroke="#c7ccd2"/><rect x="894" y="55.5" width="14" height="27" rx="2" fill="#fffbea" stroke="#e8c85a" stroke-width="1.5"/><text x="898.5" y="74" font-family="Liberation Sans" font-size="11" font-weight="bold" fill="#222">N</text><rect x="896.5" y="86.5" width="12" height="21" fill="#fff" stroke="#555"/><text x="899" y="102" font-family="Liberation Sans" font-size="11" font-weight="bold" fill="#e8a040">C</text><path d="M147.3,147.2h6.6l-3.3,3.6z" fill="#222"/><path d="M244.5,137.5 H170 A10.25,10.25 0 0,0 170,158 H244.5 Z" fill="#dfe3e8" stroke="#b7bec6" stroke-width="1"/><circle cx="170.4" cy="147.2" r="4" fill="#c5c9ce"/><circle cx="169.8" cy="146.4" r="2.4" fill="#eef0f2"/><rect x="244" y="137" width="1" height="21" fill="#b7bec6"/></svg>

<span class="t n" style="left:137.49px;top:166.84px;font-size:12px;font-weight:normal;color:#3c4450;">A</span>
<span class="t n" style="left:282.99px;top:166.84px;font-size:12px;font-weight:normal;color:#3c4450;">B</span>
<span class="t n" style="left:322.66px;top:166.84px;font-size:12px;font-weight:normal;color:#3c4450;">C</span>
<span class="t n" style="left:374.66px;top:166.84px;font-size:12px;font-weight:normal;color:#3c4450;">D</span>
<span class="t n" style="left:457.99px;top:166.84px;font-size:12px;font-weight:normal;color:#3c4450;">E</span>
<span class="t n" style="left:541.33px;top:166.84px;font-size:12px;font-weight:normal;color:#3c4450;">F</span>
<span class="t n" style="left:623.33px;top:166.84px;font-size:12px;font-weight:normal;color:#3c4450;">G</span>
<span class="t n" style="left:706.66px;top:166.84px;font-size:12px;font-weight:normal;color:#3c4450;">H</span>
<span class="t n" style="left:782.83px;top:166.84px;font-size:12px;font-weight:normal;color:#3c4450;">I</span>
<span class="t n" style="left:854.00px;top:166.84px;font-size:12px;font-weight:normal;color:#3c4450;">J</span>
<span class="t n" style="left:10.02px;top:201.42px;font-size:12.5px;font-weight:normal;color:#3c4450;">1</span>
<span class="t n" style="left:10.02px;top:227.42px;font-size:12.5px;font-weight:normal;color:#3c4450;">2</span>
<span class="t n" style="left:10.02px;top:253.42px;font-size:12.5px;font-weight:normal;color:#3c4450;">3</span>
<span class="t n" style="left:10.02px;top:279.42px;font-size:12.5px;font-weight:normal;color:#3c4450;">4</span>
<span class="t n" style="left:10.02px;top:305.42px;font-size:12.5px;font-weight:normal;color:#3c4450;">5</span>
<span class="t n" style="left:10.02px;top:331.42px;font-size:12.5px;font-weight:normal;color:#3c4450;">6</span>
<span class="t n" style="left:10.02px;top:357.42px;font-size:12.5px;font-weight:normal;color:#3c4450;">7</span>
<span class="t n" style="left:10.02px;top:383.42px;font-size:12.5px;font-weight:normal;color:#3c4450;">8</span>
<span class="t n" style="left:10.02px;top:409.42px;font-size:12.5px;font-weight:normal;color:#3c4450;">9</span>
<span class="t n" style="left:6.55px;top:435.42px;font-size:12.5px;font-weight:normal;color:#3c4450;">10</span>
<span class="t n" style="left:7.01px;top:461.42px;font-size:12.5px;font-weight:normal;color:#3c4450;">11</span>
<span class="t n" style="left:6.55px;top:487.42px;font-size:12.5px;font-weight:normal;color:#3c4450;">12</span>
<span class="t n" style="left:6.55px;top:513.42px;font-size:12.5px;font-weight:normal;color:#3c4450;">13</span>
<span class="t n" style="left:6.55px;top:539.42px;font-size:12.5px;font-weight:normal;color:#3c4450;">14</span>
<span class="t n" style="left:6.55px;top:565.42px;font-size:12.5px;font-weight:normal;color:#3c4450;">15</span>
<span class="t n" style="left:6.55px;top:591.42px;font-size:12.5px;font-weight:normal;color:#3c4450;">16</span>
<span class="t n" style="left:6.55px;top:617.42px;font-size:12.5px;font-weight:normal;color:#3c4450;">17</span>
<span class="t n" style="left:6.55px;top:643.42px;font-size:12.5px;font-weight:normal;color:#3c4450;">18</span>
<span class="t n" style="left:6.55px;top:672.42px;font-size:12.5px;font-weight:normal;color:#3c4450;">19</span>
<span class="t n" style="left:6.55px;top:698.42px;font-size:12.5px;font-weight:normal;color:#3c4450;">20</span>
<span class="t n" style="left:6.55px;top:724.42px;font-size:12.5px;font-weight:normal;color:#3c4450;">21</span>
<span class="t n" style="left:6.55px;top:750.42px;font-size:12.5px;font-weight:normal;color:#3c4450;">22</span>
<span class="t n" style="left:6.55px;top:776.42px;font-size:12.5px;font-weight:normal;color:#3c4450;">23</span>
<span class="t n" style="left:6.55px;top:802.42px;font-size:12.5px;font-weight:normal;color:#3c4450;">24</span>
<span class="t n" style="left:6.55px;top:831.42px;font-size:12.5px;font-weight:normal;color:#3c4450;">25</span>
<span class="t n" style="left:6.55px;top:857.42px;font-size:12.5px;font-weight:normal;color:#3c4450;">26</span>
<span class="t n" style="left:6.55px;top:886.42px;font-size:12.5px;font-weight:normal;color:#3c4450;">27</span>
<span class="t n" style="left:6.55px;top:913.42px;font-size:12.5px;font-weight:normal;color:#3c4450;">28</span>
<span class="t" style="left:29.00px;top:191.76px;font-size:18px;font-weight:bold;color:#000;letter-spacing:0.081px;">Revenue projection</span>
<span class="t" style="left:379.47px;top:194.00px;font-size:13px;font-weight:bold;color:#000;">Year 1</span>
<span class="t" style="left:462.47px;top:194.00px;font-size:13px;font-weight:bold;color:#000;">Year 2</span>
<span class="t" style="left:545.47px;top:194.00px;font-size:13px;font-weight:bold;color:#000;">Year 3</span>
<span class="t" style="left:628.47px;top:194.00px;font-size:13px;font-weight:bold;color:#000;">Year 4</span>
<span class="t" style="left:711.47px;top:194.00px;font-size:13px;font-weight:bold;color:#000;">Year 5</span>
<span class="t" style="left:27.80px;top:224.00px;font-size:13px;font-weight:bold;color:#000;letter-spacing:0.100px;">Units</span>
<span class="t n" style="left:825.50px;top:224.00px;font-size:13px;font-weight:normal;color:#4b3e5a;letter-spacing:0.405px;">Input cells</span>
<span class="t n" style="left:27.80px;top:250.00px;font-size:13px;font-weight:normal;color:#4b3e5a;letter-spacing:0.260px;">Product 1</span>
<span class="t n" style="left:375.63px;top:250.00px;font-size:13px;font-weight:normal;color:#4b3e5a;">19,300</span>
<span class="t n" style="left:458.63px;top:250.00px;font-size:13px;font-weight:normal;color:#4b3e5a;">19,700</span>
<span class="t n" style="left:541.63px;top:250.00px;font-size:13px;font-weight:normal;color:#4b3e5a;">20,100</span>
<span class="t n" style="left:624.63px;top:250.00px;font-size:13px;font-weight:normal;color:#4b3e5a;">20,500</span>
<span class="t n" style="left:707.63px;top:250.00px;font-size:13px;font-weight:normal;color:#4b3e5a;">21,000</span>
<span class="t n" style="left:27.80px;top:276.00px;font-size:13px;font-weight:normal;color:#4b3e5a;letter-spacing:0.260px;">Product 2</span>
<span class="t n" style="left:375.63px;top:276.00px;font-size:13px;font-weight:normal;color:#4b3e5a;">15,000</span>
<span class="t n" style="left:458.63px;top:276.00px;font-size:13px;font-weight:normal;color:#4b3e5a;">15,700</span>
<span class="t n" style="left:541.63px;top:276.00px;font-size:13px;font-weight:normal;color:#4b3e5a;">16,000</span>
<span class="t n" style="left:624.63px;top:276.00px;font-size:13px;font-weight:normal;color:#4b3e5a;">16,500</span>
<span class="t n" style="left:707.63px;top:276.00px;font-size:13px;font-weight:normal;color:#4b3e5a;">16,800</span>
<span class="t n" style="left:27.80px;top:302.00px;font-size:13px;font-weight:normal;color:#4b3e5a;letter-spacing:0.260px;">Product 3</span>
<span class="t n" style="left:382.85px;top:302.00px;font-size:13px;font-weight:normal;color:#4b3e5a;">3,200</span>
<span class="t n" style="left:465.85px;top:302.00px;font-size:13px;font-weight:normal;color:#4b3e5a;">3,300</span>
<span class="t n" style="left:548.85px;top:302.00px;font-size:13px;font-weight:normal;color:#4b3e5a;">3,400</span>
<span class="t n" style="left:631.85px;top:302.00px;font-size:13px;font-weight:normal;color:#4b3e5a;">3,500</span>
<span class="t n" style="left:714.85px;top:302.00px;font-size:13px;font-weight:normal;color:#4b3e5a;">3,600</span>
<span class="t n" style="left:27.80px;top:328.00px;font-size:13px;font-weight:normal;color:#4b3e5a;letter-spacing:0.260px;">Product 4</span>
<span class="t n" style="left:382.85px;top:328.00px;font-size:13px;font-weight:normal;color:#4b3e5a;">2,000</span>
<span class="t n" style="left:465.85px;top:328.00px;font-size:13px;font-weight:normal;color:#4b3e5a;">2,100</span>
<span class="t n" style="left:548.85px;top:328.00px;font-size:13px;font-weight:normal;color:#4b3e5a;">2,200</span>
<span class="t n" style="left:631.85px;top:328.00px;font-size:13px;font-weight:normal;color:#4b3e5a;">2,400</span>
<span class="t n" style="left:714.85px;top:328.00px;font-size:13px;font-weight:normal;color:#4b3e5a;">2,500</span>
<span class="t" style="left:27.80px;top:380.00px;font-size:13px;font-weight:bold;color:#000;letter-spacing:0.053px;">Unit price</span>
<span class="t" style="left:280.58px;top:380.00px;font-size:13px;font-weight:bold;color:#000;">Uplift</span>
<span class="t n" style="left:27.80px;top:406.00px;font-size:13px;font-weight:normal;color:#1a1a1a;letter-spacing:0.260px;">Product 1</span>
<span class="t n" style="left:284.16px;top:406.00px;font-size:13px;font-weight:normal;color:#4b3e5a;">2.0%</span>
<span class="t n" style="left:382.85px;top:406.00px;font-size:13px;font-weight:normal;color:#4b3e5a;">12.00</span>
<span class="t n" style="left:465.85px;top:406.00px;font-size:13px;font-weight:normal;color:#000;">12.24</span>
<span class="t n" style="left:548.85px;top:406.00px;font-size:13px;font-weight:normal;color:#000;">12.48</span>
<span class="t n" style="left:631.85px;top:406.00px;font-size:13px;font-weight:normal;color:#000;">12.73</span>
<span class="t n" style="left:714.85px;top:406.00px;font-size:13px;font-weight:normal;color:#000;">12.99</span>
<span class="t n" style="left:27.80px;top:432.00px;font-size:13px;font-weight:normal;color:#1a1a1a;letter-spacing:0.260px;">Product 2</span>
<span class="t n" style="left:284.16px;top:432.00px;font-size:13px;font-weight:normal;color:#4b3e5a;">5.0%</span>
<span class="t n" style="left:390.09px;top:432.00px;font-size:13px;font-weight:normal;color:#4b3e5a;">3.00</span>
<span class="t n" style="left:473.09px;top:432.00px;font-size:13px;font-weight:normal;color:#000;">3.15</span>
<span class="t n" style="left:556.09px;top:432.00px;font-size:13px;font-weight:normal;color:#000;">3.31</span>
<span class="t n" style="left:639.09px;top:432.00px;font-size:13px;font-weight:normal;color:#000;">3.47</span>
<span class="t n" style="left:722.09px;top:432.00px;font-size:13px;font-weight:normal;color:#000;">3.65</span>
<span class="t n" style="left:27.80px;top:458.00px;font-size:13px;font-weight:normal;color:#1a1a1a;letter-spacing:0.260px;">Product 3</span>
<span class="t n" style="left:284.16px;top:458.00px;font-size:13px;font-weight:normal;color:#4b3e5a;">4.0%</span>
<span class="t n" style="left:390.09px;top:458.00px;font-size:13px;font-weight:normal;color:#4b3e5a;">1.50</span>
<span class="t n" style="left:473.09px;top:458.00px;font-size:13px;font-weight:normal;color:#000;">1.56</span>
<span class="t n" style="left:556.09px;top:458.00px;font-size:13px;font-weight:normal;color:#000;">1.62</span>
<span class="t n" style="left:639.09px;top:458.00px;font-size:13px;font-weight:normal;color:#000;">1.69</span>
<span class="t n" style="left:722.09px;top:458.00px;font-size:13px;font-weight:normal;color:#000;">1.75</span>
<span class="t n" style="left:27.80px;top:484.00px;font-size:13px;font-weight:normal;color:#1a1a1a;letter-spacing:0.260px;">Product 4</span>
<span class="t n" style="left:284.16px;top:484.00px;font-size:13px;font-weight:normal;color:#4b3e5a;">2.0%</span>
<span class="t n" style="left:390.09px;top:484.00px;font-size:13px;font-weight:normal;color:#4b3e5a;">6.00</span>
<span class="t n" style="left:473.09px;top:484.00px;font-size:13px;font-weight:normal;color:#000;">6.12</span>
<span class="t n" style="left:556.09px;top:484.00px;font-size:13px;font-weight:normal;color:#000;">6.24</span>
<span class="t n" style="left:639.09px;top:484.00px;font-size:13px;font-weight:normal;color:#000;">6.37</span>
<span class="t n" style="left:722.09px;top:484.00px;font-size:13px;font-weight:normal;color:#000;">6.49</span>
<span class="t" style="left:27.80px;top:536.00px;font-size:13px;font-weight:bold;color:#000;letter-spacing:0.114px;">Revenue</span>
<span class="t n" style="left:27.80px;top:562.00px;font-size:13px;font-weight:normal;color:#1a1a1a;letter-spacing:0.260px;">Product 1</span>
<span class="t n" style="left:370.80px;top:562.00px;font-size:13px;font-weight:normal;color:#000;">231,600</span>
<span class="t n" style="left:453.80px;top:562.00px;font-size:13px;font-weight:normal;color:#000;">241,128</span>
<span class="t n" style="left:536.80px;top:562.00px;font-size:13px;font-weight:normal;color:#000;">250,944</span>
<span class="t n" style="left:619.80px;top:562.00px;font-size:13px;font-weight:normal;color:#000;">261,057</span>
<span class="t n" style="left:702.80px;top:562.00px;font-size:13px;font-weight:normal;color:#000;">272,773</span>
<span class="t n" style="left:27.80px;top:588.00px;font-size:13px;font-weight:normal;color:#1a1a1a;letter-spacing:0.260px;">Product 2</span>
<span class="t n" style="left:378.03px;top:588.00px;font-size:13px;font-weight:normal;color:#000;">45,000</span>
<span class="t n" style="left:461.03px;top:588.00px;font-size:13px;font-weight:normal;color:#000;">49,455</span>
<span class="t n" style="left:544.03px;top:588.00px;font-size:13px;font-weight:normal;color:#000;">52,920</span>
<span class="t n" style="left:627.03px;top:588.00px;font-size:13px;font-weight:normal;color:#000;">57,302</span>
<span class="t n" style="left:710.03px;top:588.00px;font-size:13px;font-weight:normal;color:#000;">61,262</span>
<span class="t n" style="left:27.80px;top:614.00px;font-size:13px;font-weight:normal;color:#1a1a1a;letter-spacing:0.260px;">Product 3</span>
<span class="t n" style="left:385.25px;top:614.00px;font-size:13px;font-weight:normal;color:#000;">4,800</span>
<span class="t n" style="left:468.25px;top:614.00px;font-size:13px;font-weight:normal;color:#000;">5,148</span>
<span class="t n" style="left:551.25px;top:614.00px;font-size:13px;font-weight:normal;color:#000;">5,516</span>
<span class="t n" style="left:634.25px;top:614.00px;font-size:13px;font-weight:normal;color:#000;">5,906</span>
<span class="t n" style="left:717.25px;top:614.00px;font-size:13px;font-weight:normal;color:#000;">6,317</span>
<span class="t n" style="left:27.80px;top:640.00px;font-size:13px;font-weight:normal;color:#1a1a1a;letter-spacing:0.260px;">Product 4</span>
<span class="t n" style="left:378.03px;top:640.00px;font-size:13px;font-weight:normal;color:#000;">12,000</span>
<span class="t n" style="left:461.03px;top:640.00px;font-size:13px;font-weight:normal;color:#000;">12,852</span>
<span class="t n" style="left:544.03px;top:640.00px;font-size:13px;font-weight:normal;color:#000;">13,733</span>
<span class="t n" style="left:627.03px;top:640.00px;font-size:13px;font-weight:normal;color:#000;">15,281</span>
<span class="t n" style="left:710.03px;top:640.00px;font-size:13px;font-weight:normal;color:#000;">16,236</span>
<span class="t" style="left:27.80px;top:667.00px;font-size:13px;font-weight:bold;color:#000;letter-spacing:0.027px;">Product revenue</span>
<span class="t" style="left:372.80px;top:667.00px;font-size:13px;font-weight:bold;color:#000;letter-spacing:-0.250px;">293,400</span>
<span class="t" style="left:455.80px;top:667.00px;font-size:13px;font-weight:bold;color:#000;letter-spacing:-0.250px;">308,583</span>
<span class="t" style="left:539.52px;top:667.00px;font-size:13px;font-weight:bold;color:#000;letter-spacing:-0.250px;">323,114</span>
<span class="t" style="left:621.80px;top:667.00px;font-size:13px;font-weight:bold;color:#000;letter-spacing:-0.250px;">339,547</span>
<span class="t" style="left:704.80px;top:667.00px;font-size:13px;font-weight:bold;color:#000;letter-spacing:-0.250px;">356,588</span>
<span class="t n" style="left:27.80px;top:721.00px;font-size:13px;font-weight:normal;color:#4b3e5a;letter-spacing:0.436px;">Other revenue 1</span>
<span class="t n" style="left:385.25px;top:721.00px;font-size:13px;font-weight:normal;color:#4b3e5a;">5,000</span>
<span class="t n" style="left:468.25px;top:721.00px;font-size:13px;font-weight:normal;color:#4b3e5a;">5,200</span>
<span class="t n" style="left:551.25px;top:721.00px;font-size:13px;font-weight:normal;color:#4b3e5a;">5,400</span>
<span class="t n" style="left:634.25px;top:721.00px;font-size:13px;font-weight:normal;color:#4b3e5a;">6,000</span>
<span class="t n" style="left:717.25px;top:721.00px;font-size:13px;font-weight:normal;color:#4b3e5a;">6,200</span>
<span class="t n" style="left:27.80px;top:747.00px;font-size:13px;font-weight:normal;color:#4b3e5a;letter-spacing:0.436px;">Other revenue 2</span>
<span class="t n" style="left:385.25px;top:747.00px;font-size:13px;font-weight:normal;color:#4b3e5a;">8,000</span>
<span class="t n" style="left:468.25px;top:747.00px;font-size:13px;font-weight:normal;color:#4b3e5a;">9,000</span>
<span class="t n" style="left:544.03px;top:747.00px;font-size:13px;font-weight:normal;color:#4b3e5a;">10,000</span>
<span class="t n" style="left:627.03px;top:747.00px;font-size:13px;font-weight:normal;color:#4b3e5a;">12,000</span>
<span class="t n" style="left:710.03px;top:747.00px;font-size:13px;font-weight:normal;color:#4b3e5a;">14,000</span>
<span class="t n" style="left:27.80px;top:773.00px;font-size:13px;font-weight:normal;color:#4b3e5a;letter-spacing:0.436px;">Other revenue 3</span>
<span class="t n" style="left:385.25px;top:773.00px;font-size:13px;font-weight:normal;color:#4b3e5a;">1,000</span>
<span class="t n" style="left:468.25px;top:773.00px;font-size:13px;font-weight:normal;color:#4b3e5a;">1,100</span>
<span class="t n" style="left:551.25px;top:773.00px;font-size:13px;font-weight:normal;color:#4b3e5a;">1,200</span>
<span class="t n" style="left:634.25px;top:773.00px;font-size:13px;font-weight:normal;color:#4b3e5a;">1,500</span>
<span class="t n" style="left:717.25px;top:773.00px;font-size:13px;font-weight:normal;color:#4b3e5a;">2,000</span>
<span class="t n" style="left:27.80px;top:799.00px;font-size:13px;font-weight:normal;color:#4b3e5a;letter-spacing:0.436px;">Other revenue 4</span>
<span class="t n" style="left:385.25px;top:799.00px;font-size:13px;font-weight:normal;color:#4b3e5a;">5,600</span>
<span class="t n" style="left:468.25px;top:799.00px;font-size:13px;font-weight:normal;color:#4b3e5a;">6,000</span>
<span class="t n" style="left:551.25px;top:799.00px;font-size:13px;font-weight:normal;color:#4b3e5a;">6,300</span>
<span class="t n" style="left:634.25px;top:799.00px;font-size:13px;font-weight:normal;color:#4b3e5a;">6,600</span>
<span class="t n" style="left:717.25px;top:799.00px;font-size:13px;font-weight:normal;color:#4b3e5a;">6,800</span>
<span class="t" style="left:27.80px;top:826.00px;font-size:13px;font-weight:bold;color:#000;letter-spacing:0.219px;">Other revenue</span>
<span class="t" style="left:379.78px;top:826.00px;font-size:13px;font-weight:bold;color:#000;letter-spacing:-0.250px;">19,600</span>
<span class="t" style="left:462.78px;top:826.00px;font-size:13px;font-weight:bold;color:#000;letter-spacing:-0.250px;">21,300</span>
<span class="t" style="left:545.78px;top:826.00px;font-size:13px;font-weight:bold;color:#000;letter-spacing:-0.250px;">22,900</span>
<span class="t" style="left:628.78px;top:826.00px;font-size:13px;font-weight:bold;color:#000;letter-spacing:-0.250px;">26,100</span>
<span class="t" style="left:711.78px;top:826.00px;font-size:13px;font-weight:bold;color:#000;letter-spacing:-0.250px;">29,000</span>
<span class="t" style="left:27.80px;top:881.00px;font-size:13px;font-weight:bold;color:#000;letter-spacing:0.188px;">Total revenue</span>
<span class="t" style="left:372.80px;top:881.00px;font-size:13px;font-weight:bold;color:#000;letter-spacing:-0.250px;">313,000</span>
<span class="t" style="left:455.80px;top:881.00px;font-size:13px;font-weight:bold;color:#000;letter-spacing:-0.250px;">329,883</span>
<span class="t" style="left:538.80px;top:881.00px;font-size:13px;font-weight:bold;color:#000;letter-spacing:-0.250px;">346,014</span>
<span class="t" style="left:621.80px;top:881.00px;font-size:13px;font-weight:bold;color:#000;letter-spacing:-0.250px;">365,647</span>
<span class="t" style="left:704.80px;top:881.00px;font-size:13px;font-weight:bold;color:#000;letter-spacing:-0.250px;">385,588</span>
<span class="t n" style="left:697.50px;top:5.59px;font-size:12.3px;font-weight:normal;color:#fff;letter-spacing:-0.056px;">revenue-projection-template-v-1.00</span>
<span class="t n" style="left:890.50px;top:5.59px;font-size:12.3px;font-weight:normal;color:#fff;">-</span>
<span class="t n" style="left:899.50px;top:5.59px;font-size:12.3px;font-weight:normal;color:#fff;">M</span>
<span class="t" style="left:19.20px;top:32.27px;font-size:11.5px;font-weight:bold;color:#f4f8e8;letter-spacing:-0.453px;">File</span>
<span class="t n" style="left:73.40px;top:31.27px;font-size:11.5px;font-weight:normal;color:#3b3b3b;letter-spacing:-0.422px;">Home</span>
<span class="t n" style="left:130.70px;top:31.27px;font-size:11.5px;font-weight:normal;color:#3b3b3b;letter-spacing:-0.011px;">Insert</span>
<span class="t n" style="left:188.00px;top:31.27px;font-size:11.5px;font-weight:normal;color:#3b3b3b;letter-spacing:-0.263px;">Page Layout</span>
<span class="t n" style="left:278.00px;top:31.27px;font-size:11.5px;font-weight:normal;color:#3b3b3b;letter-spacing:-0.242px;">Formulas</span>
<span class="t n" style="left:353.00px;top:31.27px;font-size:11.5px;font-weight:normal;color:#3b3b3b;letter-spacing:-0.149px;">Data</span>
<span class="t n" style="left:404.80px;top:31.27px;font-size:11.5px;font-weight:normal;color:#3b3b3b;letter-spacing:-0.253px;">Review</span>
<span class="t n" style="left:469.00px;top:31.27px;font-size:11.5px;font-weight:normal;color:#3b3b3b;letter-spacing:-0.030px;">View</span>
<span class="t n" style="left:522.50px;top:31.27px;font-size:11.5px;font-weight:normal;color:#3b3b3b;letter-spacing:-0.102px;">Developer</span>
<span class="t n" style="left:11.80px;top:89.69px;font-size:11px;font-weight:normal;color:#8a8a8a;letter-spacing:-0.528px;">Paste</span>
<span class="t n" style="left:68.70px;top:55.69px;font-size:11px;font-weight:normal;color:#3b3b3b;letter-spacing:-0.042px;">Cut</span>
<span class="t n" style="left:68.70px;top:77.69px;font-size:11px;font-weight:normal;color:#3b3b3b;letter-spacing:-0.072px;">Copy</span>
<span class="t n" style="left:68.70px;top:99.69px;font-size:11px;font-weight:normal;color:#3b3b3b;letter-spacing:0.089px;">Format Painter</span>
<span class="t n" style="left:40.50px;top:119.69px;font-size:11px;font-weight:normal;color:#6a717b;letter-spacing:0.323px;">Clipboard</span>
<span class="t n" style="left:159.70px;top:63.69px;font-size:11px;font-weight:normal;color:#222;letter-spacing:0.116px;">Calibri</span>
<span class="t n" style="left:270.80px;top:63.69px;font-size:11px;font-weight:normal;color:#222;letter-spacing:-0.211px;">11</span>
<span class="t n" style="left:234.80px;top:119.69px;font-size:11px;font-weight:normal;color:#6a717b;letter-spacing:0.246px;">Font</span>
<span class="t n" style="left:453.20px;top:119.69px;font-size:11px;font-weight:normal;color:#6a717b;letter-spacing:0.342px;">Alignment</span>
<span class="t n" style="left:519.30px;top:63.69px;font-size:11px;font-weight:normal;color:#3b3b3b;letter-spacing:0.119px;">Wrap Text</span>
<span class="t n" style="left:519.30px;top:92.69px;font-size:11px;font-weight:normal;color:#3b3b3b;letter-spacing:0.214px;">Merge &amp; Center</span>
<span class="t n" style="left:627.40px;top:63.69px;font-size:11px;font-weight:normal;color:#222;letter-spacing:0.008px;">General</span>
<span class="t n" style="left:660.50px;top:119.69px;font-size:11px;font-weight:normal;color:#6a717b;letter-spacing:0.229px;">Number</span>
<span class="t n" style="left:771.70px;top:89.69px;font-size:11px;font-weight:normal;color:#3b3b3b;letter-spacing:0.450px;">Conditional</span>
<span class="t n" style="left:769.70px;top:102.69px;font-size:11px;font-weight:normal;color:#3b3b3b;letter-spacing:0.342px;">Formatting</span>
<span class="t n" style="left:845.00px;top:89.69px;font-size:11px;font-weight:normal;color:#3b3b3b;letter-spacing:0.143px;">Format</span>
<span class="t n" style="left:839.40px;top:102.69px;font-size:11px;font-weight:normal;color:#3b3b3b;letter-spacing:-0.023px;">as Table</span>
<span class="t n" style="left:60.20px;top:142.59px;font-size:12.3px;font-weight:normal;color:#111;letter-spacing:-0.130px;">K12</span>
<span class="t" style="left:316.40px;top:62.73px;font-size:14.5px;font-weight:bold;color:#222;font-family:'Liberation Serif',serif;">A</span>
<span class="t" style="left:339.20px;top:66.96px;font-size:9.5px;font-weight:bold;color:#222;font-family:'Liberation Serif',serif;">A</span>
<span class="t" style="left:162.50px;top:91.00px;font-size:13px;font-weight:bold;color:#111;font-family:'Liberation Serif',serif;">B</span>
<span class="t" style="left:186.00px;top:91.00px;font-size:13px;font-weight:bold;color:#111;font-family:'Liberation Serif',serif;font-style:italic;">I</span>
<span class="t" style="left:208.80px;top:91.84px;font-size:12px;font-weight:bold;color:#111;font-family:'Liberation Serif',serif;">U</span>
<span class="t" style="left:329.20px;top:89.15px;font-size:14px;font-weight:bold;color:#2b3f70;font-family:'Liberation Serif',serif;">A</span>
<span class="t n" style="left:663.50px;top:92.42px;font-size:12.5px;font-weight:normal;color:#222;letter-spacing:0.675px;">%</span>
<span class="t" style="left:226.00px;top:141.00px;font-size:13px;font-weight:bold;color:#222;font-family:'Liberation Serif',serif;font-style:italic;">fx</span>
<div class="a" style="left:0;top:0;width:2px;height:931px;background:#000"></div>
<div class="a" style="left:904px;top:0;width:1px;height:931px;background:#666"></div>
<div class="a" style="left:905px;top:0;width:2px;height:931px;background:#000"></div>
<div class="a" style="left:0;top:929px;width:907px;height:2px;background:#000"></div>
</body></html>
